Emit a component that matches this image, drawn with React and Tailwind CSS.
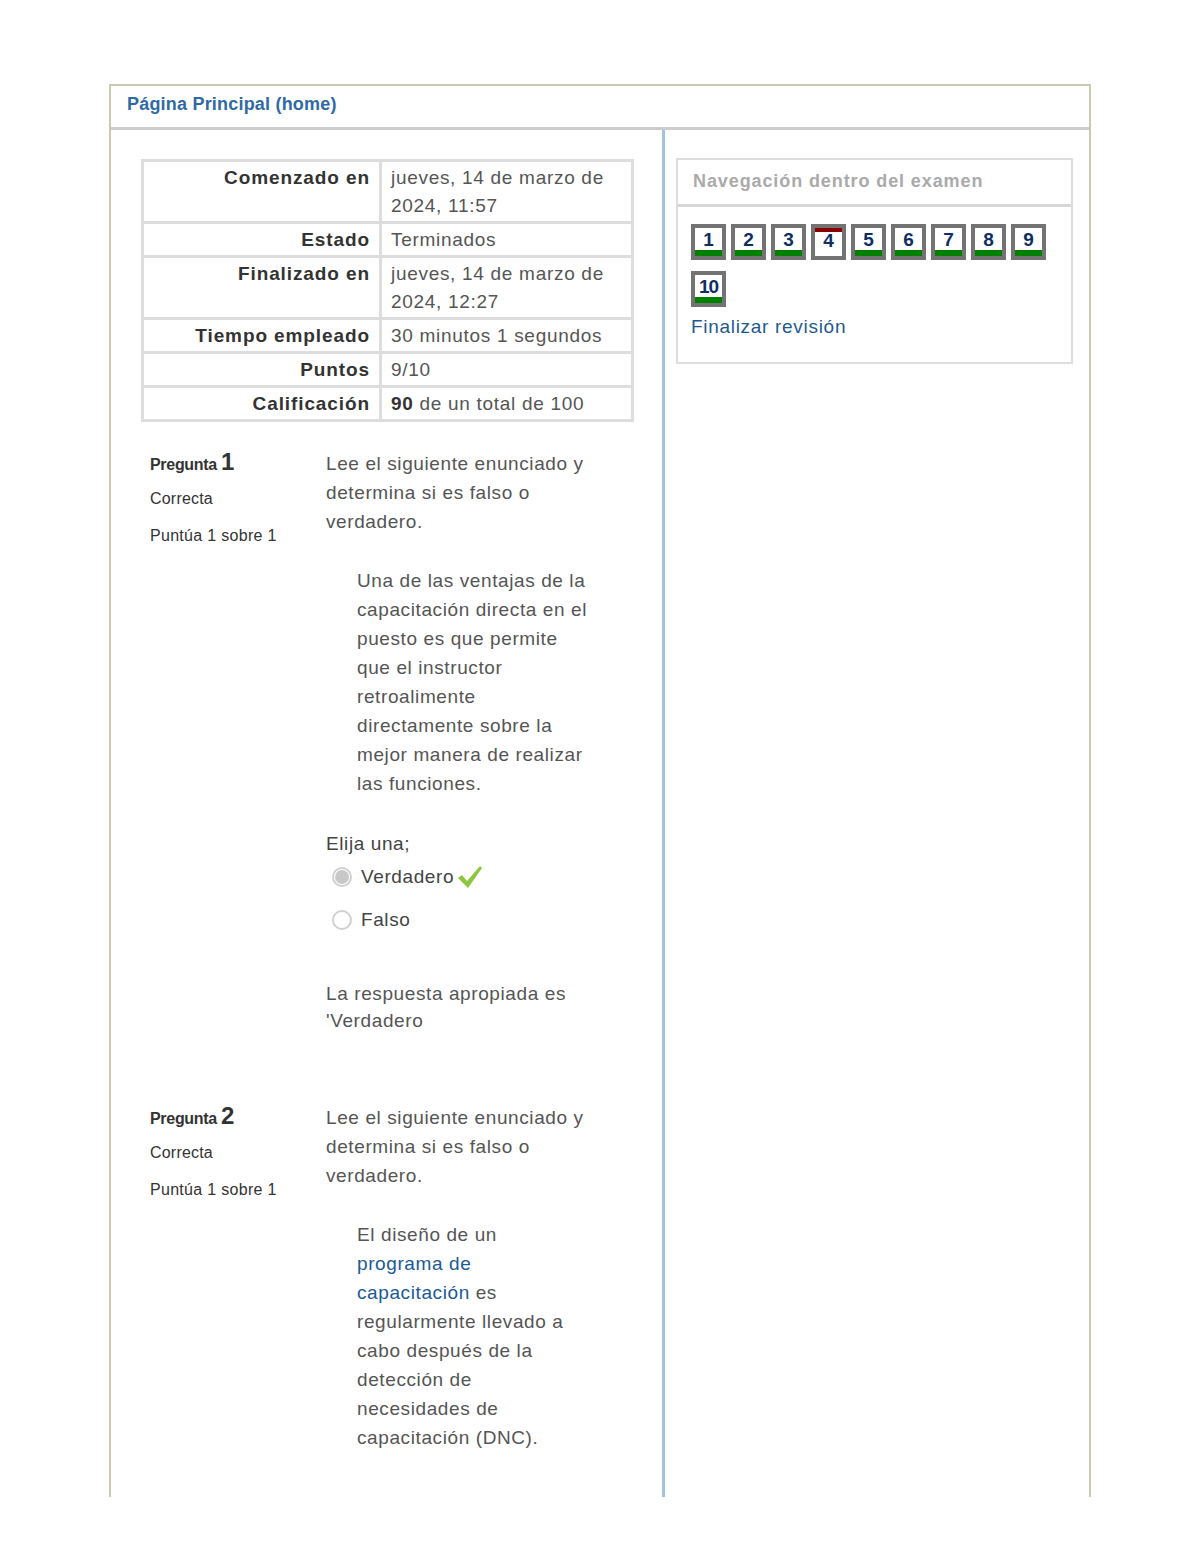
import React from 'react';

const font = { fontFamily: '"Liberation Sans", Arial, sans-serif' };

const rows = [
  { label: 'Comenzado en', value: <>jueves, 14 de marzo de<br />2024, 11:57</> },
  { label: 'Estado', value: 'Terminados' },
  { label: 'Finalizado en', value: <>jueves, 14 de marzo de<br />2024, 12:27</> },
  { label: 'Tiempo empleado', value: '30 minutos 1 segundos' },
  { label: 'Puntos', value: '9/10' },
  { label: 'Calificación', value: <><b className="text-[#333]">90</b> de un total de 100</> },
];

function SummaryTable() {
  return (
    <table className="w-[493px] border-collapse border-[3px] border-[#dddddd] text-[19px] leading-[28px]">
      <tbody>
        {rows.map((r) => (
          <tr key={r.label}>
            <th className="w-[238px] border-[3px] border-[#dddddd] pr-[9px] pt-[2px] pb-[1px] text-right align-top font-bold tracking-[0.9px] text-[#333]">
              {r.label}
            </th>
            <td className="border-[3px] border-[#dddddd] pl-[9px] pt-[2px] pb-[1px] align-top tracking-[0.7px] text-[#555]">{r.value}</td>
          </tr>
        ))}
      </tbody>
    </table>
  );
}

function Radio({ checked }) {
  return (
    <span className="inline-flex h-[20px] w-[20px] items-center justify-center rounded-full border-2 border-[#d0d0d0] bg-white">
      {checked && <span className="h-[14px] w-[14px] rounded-full bg-[#c8c8c8]" />}
    </span>
  );
}

function Check() {
  return (
    <svg width="28" height="26" viewBox="0 0 28 26" className="ml-[2px]">
      <path d="M2 14 L6 11 L11 17 L24 2 L26 4 L12 24 Z" fill="#8cc63f" />
    </svg>
  );
}

function QuestionInfo({ n }) {
  return (
    <div className="w-[185px] shrink-0 pl-[9px] pt-[4px] text-[#333]">
      <div className="flex items-baseline gap-[4px]">
        <span className="text-[16px] font-bold tracking-[-0.3px]">Pregunta</span>
        <span className="text-[24px] font-bold leading-none">{n}</span>
      </div>
      <div className="mt-[10px] text-[16px] tracking-[0.2px]">Correcta</div>
      <div className="mt-[13px] text-[16px] tracking-[0.3px]">Puntúa 1 sobre 1</div>
    </div>
  );
}

function Question1() {
  return (
    <div className="flex">
      <QuestionInfo n="1" />
      <div className="w-[290px] text-[19px] leading-[29px] tracking-[0.6px] text-[#555]">
        <p className="w-[275px] pt-[3px]">Lee el siguiente enunciado y determina si es falso o verdadero.</p>
        <p className="mt-[30px] ml-[31px] w-[234px]">
          Una de las ventajas de la capacitación directa en el puesto es que permite que el instructor retroalimente directamente sobre la mejor manera de realizar las funciones.
        </p>
        <p className="mt-[31px] text-[#444]">Elija una;</p>
        <div className="mt-[4px] flex items-center gap-[9px] pl-[6px]">
          <Radio checked />
          <span className="flex items-center text-[#444]">Verdadero<Check /></span>
        </div>
        <div className="mt-[14px] flex items-center gap-[9px] pl-[6px]">
          <Radio />
          <span className="text-[#444]">Falso</span>
        </div>
        <p className="mt-[46px] w-[270px] leading-[27px]">La respuesta apropiada es 'Verdadero</p>
      </div>
    </div>
  );
}

function Question2() {
  return (
    <div className="mt-[66px] flex">
      <QuestionInfo n="2" />
      <div className="w-[290px] text-[19px] leading-[29px] tracking-[0.6px] text-[#555]">
        <p className="w-[275px] pt-[3px]">Lee el siguiente enunciado y determina si es falso o verdadero.</p>
        <p className="mt-[30px] ml-[31px] w-[225px]">
          El diseño de un <span className="text-[#1a5a96]">programa de capacitación</span> es regularmente llevado a cabo después de la detección de necesidades de capacitación (DNC).
        </p>
      </div>
    </div>
  );
}

const navItems = [1, 2, 3, 4, 5, 6, 7, 8, 9, 10];

function NavButton({ n }) {
  const wrong = n === 4;
  return (
    <div className="h-[36px] w-[35px] shrink-0 border-[4px] border-[#737373] bg-white">
      <div className={wrong ? 'h-[4px] bg-[#8b0000]' : 'h-[3px] bg-white'} />
      <div className={'flex h-[19px] items-center justify-center text-[19px] font-bold text-[#0d2f63] ' + (n === 10 ? 'tracking-[-1px]' : '')}>{n}</div>
      <div className={wrong ? 'h-[5px] bg-white' : 'h-[6px] bg-[#008000]'} />
    </div>
  );
}

function QuizNav() {
  return (
    <div className="ml-[11px] mt-[28px] w-[397px] border-[2px] border-[#dddddd]">
      <div className="border-b-[3px] border-[#d6d6d6] px-[15px] pb-[9px] pt-[8px] text-[18px] font-bold tracking-[0.9px] text-[#aaaaaa]">
        Navegación dentro del examen
      </div>
      <div className="px-[13px] pt-[17px] pb-[20px]">
        <div className="flex w-[370px] flex-wrap gap-x-[5px] gap-y-[11px]">
          {navItems.map((n) => <NavButton key={n} n={n} />)}
        </div>
        <div className="mt-[6px] text-[19px] tracking-[0.7px] text-[#1f5a8e]">Finalizar revisión</div>
      </div>
    </div>
  );
}

export default function App() {
  return (
    <div className="h-[1553px] bg-white" style={font}>
      <div className="ml-[109px] pt-[84px]">
        <div className="w-[982px] border-x-[2px] border-[#cdc9b0]">
          <div className="flex h-[46px] items-center border-t-[2px] border-b-[3px] border-t-[#cdc9b0] border-b-[#cccccc] pb-[4px] pl-[16px] text-[18px] font-bold tracking-[0.2px] text-[#2f6aa4]">
            Página Principal (home)
          </div>
          <div className="flex h-[1367px]">
            <div className="w-[554px] border-r-[3px] border-[#a3c3e3] pl-[30px] pt-[29px]">
              <SummaryTable />
              <div className="mt-[24px]">
                <Question1 />
                <Question2 />
              </div>
            </div>
            <div className="flex-1">
              <QuizNav />
            </div>
          </div>
        </div>
      </div>
    </div>
  );
}
